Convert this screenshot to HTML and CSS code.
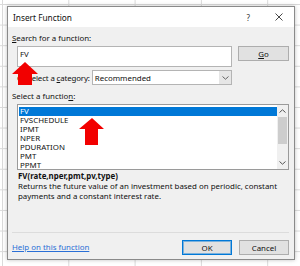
FILE: index.html
```html
<!DOCTYPE html>
<html>
<head>
<meta charset="utf-8">
<link rel="stylesheet" href="styles.css">
</head>
<body>
<div class="dialog">
  <div class="titlebar">
    <span class="title">Insert Function</span>
    <span class="tb-btns">
      <span class="help">?</span>
      <svg class="close" width="8" height="8" viewBox="0 0 8 8"><path d="M0.5 0.5 L7.5 7.5 M7.5 0.5 L0.5 7.5" stroke="#333" stroke-width="0.9" fill="none"/></svg>
    </span>
  </div>
  <div class="body">
    <div class="label"><u>S</u>earch for a function:</div>
    <div class="search-row">
      <div class="input">FV</div>
      <div class="btn go"><u>G</u>o</div>
    </div>
    <div class="cat-row">
      <span class="cat-label">Or <u>s</u>elect a <u>c</u>ategory:</span>
      <div class="select">
        <span class="sel-text">Recommended</span>
        <span class="drop"><svg width="7" height="4" viewBox="0 0 7 4"><path d="M0.5 0.5 L3.5 3.2 L6.5 0.5" stroke="#555" stroke-width="0.9" fill="none"/></svg></span>
      </div>
    </div>
    <div class="label fn-label">Select a functio<u>n</u>:</div>
    <div class="list">
      <ul class="items">
        <li class="item selected">FV</li>
        <li class="item">FVSCHEDULE</li>
        <li class="item">IPMT</li>
        <li class="item">NPER</li>
        <li class="item">PDURATION</li>
        <li class="item">PMT</li>
        <li class="item">PPMT</li>
      </ul>
      <div class="scrollbar">
        <span class="sb-arrow"><svg width="7" height="4" viewBox="0 0 7 4"><path d="M0.5 3.5 L3.5 0.8 L6.5 3.5" stroke="#555" stroke-width="1" fill="none"/></svg></span>
        <span class="thumb"></span>
        <span class="sb-arrow bottom"><svg width="7" height="4" viewBox="0 0 7 4"><path d="M0.5 0.5 L3.5 3.2 L6.5 0.5" stroke="#555" stroke-width="1" fill="none"/></svg></span>
      </div>
    </div>
    <div class="sig">FV(rate,nper,pmt,pv,type)</div>
    <div class="desc">Returns the future value of an investment based on periodic, constant<br>payments and a constant interest rate.</div>
    <div class="sep"></div>
    <div class="footer">
      <a class="link">Help on this function</a>
      <div class="btn ok">OK</div>
      <div class="btn cancel">Cancel</div>
    </div>
  </div>
</div>
<svg class="annot" width="300" height="266" viewBox="0 0 300 266">
  <polygon points="25,62 38,74 32,74 32,85 18,85 18,74 12,74" fill="#f20000"/>
  <polygon points="92,118 104,129 98,129 98,145 85,145 85,129 79,129" fill="#f20000"/>
</svg>
</body>
</html>
```
FILE: styles.css
```css
* { box-sizing: border-box; }
body {
  margin: 0;
  width: 300px;
  height: 266px;
  overflow: hidden;
  padding: 6px 0 0 7px;
  background-color: #fff;
  background-image:
    linear-gradient(to right, #dadada 1px, transparent 1px),
    linear-gradient(to bottom, #dadada 1px, transparent 1px);
  background-size: 66.3px 100%, 100% 20.6px;
  background-position: 2px 0, 0 4px;
  font-family: "Segoe UI", "Noto Sans", sans-serif;
  font-size: 7.9px;
  color: #111;
  position: relative;
}
.dialog {
  width: 288px;
  height: 254px;
  border: 1px solid #8a8a8a;
  box-shadow: 0 0 4px rgba(0,0,0,0.25);
  background: #f0f0f0;
  display: flex;
  flex-direction: column;
}
.titlebar {
  height: 20px;
  background: #fff;
  display: flex;
  align-items: center;
  padding-left: 5px;
}
.title { font-size: 8.3px; }
.tb-btns {
  margin-left: auto;
  display: flex;
  align-items: center;
}
.help { font-size: 8px; color: #333; margin-right: 25px; }
.close { margin-right: 11px; }
.body {
  flex: 1;
  padding: 6px 4px 0 4px;
  display: flex;
  flex-direction: column;
}
.label { line-height: 10px; }
.search-row {
  margin-top: 3px;
  padding-left: 5px;
  display: flex;
  align-items: flex-start;
  gap: 6px;
}
.input {
  width: 215px;
  height: 21px;
  background: #fff;
  border: 1px solid #b4b4b4;
  padding: 2px 0 0 2px;
  line-height: 10px;
}
.btn {
  background: #e1e1e1;
  border: 1px solid #adadad;
  display: flex;
  align-items: center;
  justify-content: center;
  line-height: 10px;
}
.go { width: 51px; height: 15px; }
.cat-row {
  margin-top: 3px;
  padding-left: 5px;
  width: 220px;
  display: flex;
  align-items: center;
  gap: 2px;
}
.cat-label { line-height: 10px; white-space: nowrap; letter-spacing: -0.15px; }
.select {
  flex: 1;
  height: 15px;
  background: #fff;
  border: 1px solid #b4b4b4;
  display: flex;
  align-items: center;
}
.sel-text { padding-left: 2px; line-height: 10px; }
.drop {
  margin-left: auto;
  width: 12px;
  height: 100%;
  background: #e6e6e6;
  display: flex;
  align-items: center;
  justify-content: center;
}
.fn-label { margin-top: 6px; }
.list {
  margin: 3px 0 0 5px;
  width: 272px;
  height: 66px;
  border: 1px solid #9a9a9a;
  background: #fff;
  display: flex;
}
.items {
  flex: 1;
  margin: 0;
  padding: 2px 0 0 1px;
  list-style: none;
}
.item { line-height: 9px; padding-left: 1px; }
.selected { background: #0078d7; color: #fff; }
.scrollbar {
  width: 11px;
  background: #f0f0f0;
  display: flex;
  flex-direction: column;
  align-items: center;
}
.sb-arrow {
  height: 12px;
  display: flex;
  align-items: center;
  justify-content: center;
}
.sb-arrow.bottom { margin-top: auto; }
.thumb {
  width: 9px;
  height: 27px;
  background: #cdcdcd;
}
.sig {
  margin-top: 1px;
  padding-left: 6px;
  font-weight: bold;
  line-height: 10px;
}
.desc {
  padding-left: 6px;
  line-height: 10px;
  white-space: nowrap;
}
.sep {
  margin-top: auto;
  height: 1px;
  background: #dcdcdc;
  width: 277px;
}
.footer {
  margin-top: 7px;
  margin-bottom: 4px;
  height: 15px;
  display: flex;
  align-items: center;
  gap: 7px;
  padding-right: 1px;
}
.link {
  color: #2a6fd6;
  text-decoration: underline;
  margin-right: auto;
  line-height: 10px;
  margin-top: -2px;
}
.ok {
  width: 50px;
  height: 15px;
  border: 1px solid #0078d7;
  box-shadow: inset 0 0 0 1px rgba(0,120,215,0.45);
}
.cancel { width: 50px; height: 15px; }
.annot {
  position: absolute;
  left: 0;
  top: 0;
  pointer-events: none;
}
```
